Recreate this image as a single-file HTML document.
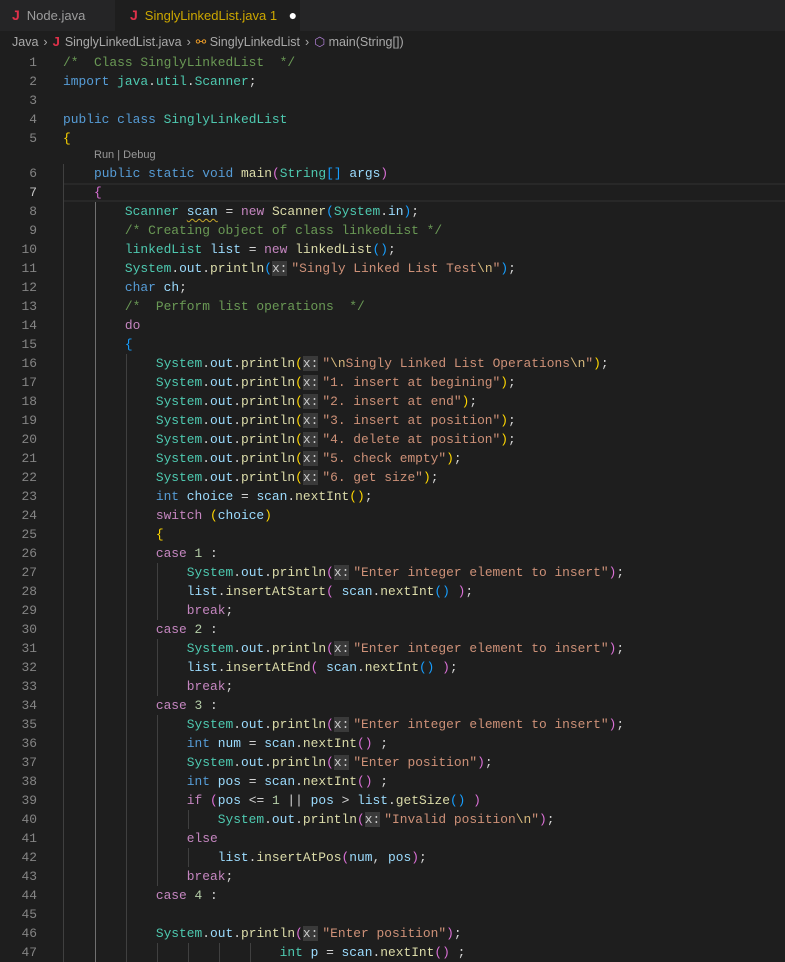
<!DOCTYPE html>
<html><head><meta charset="utf-8"><style>
*{margin:0;padding:0;box-sizing:border-box}
body{width:785px;height:962px;background:#1e1e1e;overflow:hidden;font-family:"Liberation Sans",sans-serif;position:relative}
.tabs{position:absolute;left:0;top:0;width:785px;height:31px;background:#252526}
.tab{position:absolute;top:0;height:31px;font-size:13px;line-height:31px;color:#9d9d9d}
.J{color:#e0314a;font-weight:bold;font-size:14px;margin-right:7px}
.bc{position:absolute;left:12px;top:33px;font-size:12.5px;color:#a9a9a9;line-height:18px;white-space:nowrap}
.bc .sep{color:#a9a9a9;margin:0 5px}
.ed{position:absolute;left:0;top:53px;width:785px}
.ln{position:relative;height:19px;line-height:19px;font-family:"Liberation Mono",monospace;font-size:12.9px;white-space:pre;color:#d4d4d4}
.no{position:absolute;left:0;width:37px;text-align:right;color:#858585}
.cd{position:absolute;left:63px}
.lens{height:16px;line-height:14px;font-size:11px;color:#999;padding-left:94px}
.cur{position:absolute;left:64px;right:0;top:0;height:19px;border-top:2px solid #282828;border-bottom:2px solid #282828}
.g{position:absolute;top:0;height:19px;width:1px;background:#404040}
.ga{background:#707070}
.k{color:#569cd6}.c{color:#c586c0}.t{color:#4ec9b0}.v{color:#9cdcfe}.f{color:#dcdcaa}.s{color:#ce9178}.m{color:#6a9955}.n{color:#b5cea8}.e{color:#d7ba7d}
.b1{color:#ffd700}.b2{color:#da70d6}.b3{color:#179fff}
.h{background:#3a3a3a;color:#cccccc;margin-right:4px}
.sq{text-decoration:underline wavy #c8a82c;text-decoration-thickness:1px;text-underline-offset:3px}
</style></head><body>
<div class="tabs">
 <div class="tab" style="left:0;width:115px;padding-left:12px"><span class="J">J</span>Node.java</div>
 <div class="tab" style="left:115px;width:185px;background:#1e1e1e;padding-left:15px;color:#cca700"><span class="J">J</span>SinglyLinkedList.java 1 <span style="color:#fff;font-size:14px;margin-left:8px">●</span></div>
</div>
<div class="bc">Java<span class="sep">›</span><span class="J" style="font-size:13px;margin-right:5px">J</span>SinglyLinkedList.java<span class="sep">›</span><span style="color:#ee9d28">⚯</span> SinglyLinkedList<span class="sep">›</span><span style="color:#b180d7">⬡</span> main(String[])</div>
<div class="ed">
<div class="ln"><span class="no">1</span><span class="cd"><span class="m">/*  Class SinglyLinkedList  */</span></span></div>
<div class="ln"><span class="no">2</span><span class="cd"><span class="k">import</span> <span class="t">java</span>.<span class="t">util</span>.<span class="t">Scanner</span>;</span></div>
<div class="ln"><span class="no">3</span></div>
<div class="ln"><span class="no">4</span><span class="cd"><span class="k">public</span> <span class="k">class</span> <span class="t">SinglyLinkedList</span></span></div>
<div class="ln"><span class="no">5</span><span class="cd"><span class="b1">{</span></span></div>
<div class="lens">Run | Debug</div>
<div class="ln"><i class="g" style="left:63px"></i><span class="no">6</span><span class="cd">    <span class="k">public</span> <span class="k">static</span> <span class="k">void</span> <span class="f">main</span><span class="b2">(</span><span class="t">String</span><span class="b3">[]</span> <span class="v">args</span><span class="b2">)</span></span></div>
<div class="ln"><div class="cur"></div><i class="g" style="left:63px"></i><span class="no" style="color:#c6c6c6">7</span><span class="cd">    <span class="b2">{</span></span></div>
<div class="ln"><i class="g" style="left:63px"></i><i class="g ga" style="left:95px"></i><span class="no">8</span><span class="cd">        <span class="t">Scanner</span> <span class="v sq">scan</span> = <span class="c">new</span> <span class="f">Scanner</span><span class="b3">(</span><span class="t">System</span>.<span class="v">in</span><span class="b3">)</span>;</span></div>
<div class="ln"><i class="g" style="left:63px"></i><i class="g ga" style="left:95px"></i><span class="no">9</span><span class="cd">        <span class="m">/* Creating object of class linkedList */</span></span></div>
<div class="ln"><i class="g" style="left:63px"></i><i class="g ga" style="left:95px"></i><span class="no">10</span><span class="cd">        <span class="t">linkedList</span> <span class="v">list</span> = <span class="c">new</span> <span class="f">linkedList</span><span class="b3">()</span>;</span></div>
<div class="ln"><i class="g" style="left:63px"></i><i class="g ga" style="left:95px"></i><span class="no">11</span><span class="cd">        <span class="t">System</span>.<span class="v">out</span>.<span class="f">println</span><span class="b3">(</span><span class="h">x:</span><span class="s">"Singly Linked List Test<span class="e">\n</span>"</span><span class="b3">)</span>;</span></div>
<div class="ln"><i class="g" style="left:63px"></i><i class="g ga" style="left:95px"></i><span class="no">12</span><span class="cd">        <span class="k">char</span> <span class="v">ch</span>;</span></div>
<div class="ln"><i class="g" style="left:63px"></i><i class="g ga" style="left:95px"></i><span class="no">13</span><span class="cd">        <span class="m">/*  Perform list operations  */</span></span></div>
<div class="ln"><i class="g" style="left:63px"></i><i class="g ga" style="left:95px"></i><span class="no">14</span><span class="cd">        <span class="c">do</span></span></div>
<div class="ln"><i class="g" style="left:63px"></i><i class="g ga" style="left:95px"></i><span class="no">15</span><span class="cd">        <span class="b3">{</span></span></div>
<div class="ln"><i class="g" style="left:63px"></i><i class="g ga" style="left:95px"></i><i class="g" style="left:126px"></i><span class="no">16</span><span class="cd">            <span class="t">System</span>.<span class="v">out</span>.<span class="f">println</span><span class="b1">(</span><span class="h">x:</span><span class="s">"<span class="e">\n</span>Singly Linked List Operations<span class="e">\n</span>"</span><span class="b1">)</span>;</span></div>
<div class="ln"><i class="g" style="left:63px"></i><i class="g ga" style="left:95px"></i><i class="g" style="left:126px"></i><span class="no">17</span><span class="cd">            <span class="t">System</span>.<span class="v">out</span>.<span class="f">println</span><span class="b1">(</span><span class="h">x:</span><span class="s">"1. insert at begining"</span><span class="b1">)</span>;</span></div>
<div class="ln"><i class="g" style="left:63px"></i><i class="g ga" style="left:95px"></i><i class="g" style="left:126px"></i><span class="no">18</span><span class="cd">            <span class="t">System</span>.<span class="v">out</span>.<span class="f">println</span><span class="b1">(</span><span class="h">x:</span><span class="s">"2. insert at end"</span><span class="b1">)</span>;</span></div>
<div class="ln"><i class="g" style="left:63px"></i><i class="g ga" style="left:95px"></i><i class="g" style="left:126px"></i><span class="no">19</span><span class="cd">            <span class="t">System</span>.<span class="v">out</span>.<span class="f">println</span><span class="b1">(</span><span class="h">x:</span><span class="s">"3. insert at position"</span><span class="b1">)</span>;</span></div>
<div class="ln"><i class="g" style="left:63px"></i><i class="g ga" style="left:95px"></i><i class="g" style="left:126px"></i><span class="no">20</span><span class="cd">            <span class="t">System</span>.<span class="v">out</span>.<span class="f">println</span><span class="b1">(</span><span class="h">x:</span><span class="s">"4. delete at position"</span><span class="b1">)</span>;</span></div>
<div class="ln"><i class="g" style="left:63px"></i><i class="g ga" style="left:95px"></i><i class="g" style="left:126px"></i><span class="no">21</span><span class="cd">            <span class="t">System</span>.<span class="v">out</span>.<span class="f">println</span><span class="b1">(</span><span class="h">x:</span><span class="s">"5. check empty"</span><span class="b1">)</span>;</span></div>
<div class="ln"><i class="g" style="left:63px"></i><i class="g ga" style="left:95px"></i><i class="g" style="left:126px"></i><span class="no">22</span><span class="cd">            <span class="t">System</span>.<span class="v">out</span>.<span class="f">println</span><span class="b1">(</span><span class="h">x:</span><span class="s">"6. get size"</span><span class="b1">)</span>;</span></div>
<div class="ln"><i class="g" style="left:63px"></i><i class="g ga" style="left:95px"></i><i class="g" style="left:126px"></i><span class="no">23</span><span class="cd">            <span class="k">int</span> <span class="v">choice</span> = <span class="v">scan</span>.<span class="f">nextInt</span><span class="b1">()</span>;</span></div>
<div class="ln"><i class="g" style="left:63px"></i><i class="g ga" style="left:95px"></i><i class="g" style="left:126px"></i><span class="no">24</span><span class="cd">            <span class="c">switch</span> <span class="b1">(</span><span class="v">choice</span><span class="b1">)</span></span></div>
<div class="ln"><i class="g" style="left:63px"></i><i class="g ga" style="left:95px"></i><i class="g" style="left:126px"></i><span class="no">25</span><span class="cd">            <span class="b1">{</span></span></div>
<div class="ln"><i class="g" style="left:63px"></i><i class="g ga" style="left:95px"></i><i class="g" style="left:126px"></i><span class="no">26</span><span class="cd">            <span class="c">case</span> <span class="n">1</span> :</span></div>
<div class="ln"><i class="g" style="left:63px"></i><i class="g ga" style="left:95px"></i><i class="g" style="left:126px"></i><i class="g" style="left:157px"></i><span class="no">27</span><span class="cd">                <span class="t">System</span>.<span class="v">out</span>.<span class="f">println</span><span class="b2">(</span><span class="h">x:</span><span class="s">"Enter integer element to insert"</span><span class="b2">)</span>;</span></div>
<div class="ln"><i class="g" style="left:63px"></i><i class="g ga" style="left:95px"></i><i class="g" style="left:126px"></i><i class="g" style="left:157px"></i><span class="no">28</span><span class="cd">                <span class="v">list</span>.<span class="f">insertAtStart</span><span class="b2">(</span> <span class="v">scan</span>.<span class="f">nextInt</span><span class="b3">()</span> <span class="b2">)</span>;</span></div>
<div class="ln"><i class="g" style="left:63px"></i><i class="g ga" style="left:95px"></i><i class="g" style="left:126px"></i><i class="g" style="left:157px"></i><span class="no">29</span><span class="cd">                <span class="c">break</span>;</span></div>
<div class="ln"><i class="g" style="left:63px"></i><i class="g ga" style="left:95px"></i><i class="g" style="left:126px"></i><span class="no">30</span><span class="cd">            <span class="c">case</span> <span class="n">2</span> :</span></div>
<div class="ln"><i class="g" style="left:63px"></i><i class="g ga" style="left:95px"></i><i class="g" style="left:126px"></i><i class="g" style="left:157px"></i><span class="no">31</span><span class="cd">                <span class="t">System</span>.<span class="v">out</span>.<span class="f">println</span><span class="b2">(</span><span class="h">x:</span><span class="s">"Enter integer element to insert"</span><span class="b2">)</span>;</span></div>
<div class="ln"><i class="g" style="left:63px"></i><i class="g ga" style="left:95px"></i><i class="g" style="left:126px"></i><i class="g" style="left:157px"></i><span class="no">32</span><span class="cd">                <span class="v">list</span>.<span class="f">insertAtEnd</span><span class="b2">(</span> <span class="v">scan</span>.<span class="f">nextInt</span><span class="b3">()</span> <span class="b2">)</span>;</span></div>
<div class="ln"><i class="g" style="left:63px"></i><i class="g ga" style="left:95px"></i><i class="g" style="left:126px"></i><i class="g" style="left:157px"></i><span class="no">33</span><span class="cd">                <span class="c">break</span>;</span></div>
<div class="ln"><i class="g" style="left:63px"></i><i class="g ga" style="left:95px"></i><i class="g" style="left:126px"></i><span class="no">34</span><span class="cd">            <span class="c">case</span> <span class="n">3</span> :</span></div>
<div class="ln"><i class="g" style="left:63px"></i><i class="g ga" style="left:95px"></i><i class="g" style="left:126px"></i><i class="g" style="left:157px"></i><span class="no">35</span><span class="cd">                <span class="t">System</span>.<span class="v">out</span>.<span class="f">println</span><span class="b2">(</span><span class="h">x:</span><span class="s">"Enter integer element to insert"</span><span class="b2">)</span>;</span></div>
<div class="ln"><i class="g" style="left:63px"></i><i class="g ga" style="left:95px"></i><i class="g" style="left:126px"></i><i class="g" style="left:157px"></i><span class="no">36</span><span class="cd">                <span class="k">int</span> <span class="v">num</span> = <span class="v">scan</span>.<span class="f">nextInt</span><span class="b2">()</span> ;</span></div>
<div class="ln"><i class="g" style="left:63px"></i><i class="g ga" style="left:95px"></i><i class="g" style="left:126px"></i><i class="g" style="left:157px"></i><span class="no">37</span><span class="cd">                <span class="t">System</span>.<span class="v">out</span>.<span class="f">println</span><span class="b2">(</span><span class="h">x:</span><span class="s">"Enter position"</span><span class="b2">)</span>;</span></div>
<div class="ln"><i class="g" style="left:63px"></i><i class="g ga" style="left:95px"></i><i class="g" style="left:126px"></i><i class="g" style="left:157px"></i><span class="no">38</span><span class="cd">                <span class="k">int</span> <span class="v">pos</span> = <span class="v">scan</span>.<span class="f">nextInt</span><span class="b2">()</span> ;</span></div>
<div class="ln"><i class="g" style="left:63px"></i><i class="g ga" style="left:95px"></i><i class="g" style="left:126px"></i><i class="g" style="left:157px"></i><span class="no">39</span><span class="cd">                <span class="c">if</span> <span class="b2">(</span><span class="v">pos</span> &lt;= <span class="n">1</span> || <span class="v">pos</span> &gt; <span class="v">list</span>.<span class="f">getSize</span><span class="b3">()</span> <span class="b2">)</span></span></div>
<div class="ln"><i class="g" style="left:63px"></i><i class="g ga" style="left:95px"></i><i class="g" style="left:126px"></i><i class="g" style="left:157px"></i><i class="g" style="left:188px"></i><span class="no">40</span><span class="cd">                    <span class="t">System</span>.<span class="v">out</span>.<span class="f">println</span><span class="b2">(</span><span class="h">x:</span><span class="s">"Invalid position<span class="e">\n</span>"</span><span class="b2">)</span>;</span></div>
<div class="ln"><i class="g" style="left:63px"></i><i class="g ga" style="left:95px"></i><i class="g" style="left:126px"></i><i class="g" style="left:157px"></i><span class="no">41</span><span class="cd">                <span class="c">else</span></span></div>
<div class="ln"><i class="g" style="left:63px"></i><i class="g ga" style="left:95px"></i><i class="g" style="left:126px"></i><i class="g" style="left:157px"></i><i class="g" style="left:188px"></i><span class="no">42</span><span class="cd">                    <span class="v">list</span>.<span class="f">insertAtPos</span><span class="b2">(</span><span class="v">num</span>, <span class="v">pos</span><span class="b2">)</span>;</span></div>
<div class="ln"><i class="g" style="left:63px"></i><i class="g ga" style="left:95px"></i><i class="g" style="left:126px"></i><i class="g" style="left:157px"></i><span class="no">43</span><span class="cd">                <span class="c">break</span>;</span></div>
<div class="ln"><i class="g" style="left:63px"></i><i class="g ga" style="left:95px"></i><i class="g" style="left:126px"></i><span class="no">44</span><span class="cd">            <span class="c">case</span> <span class="n">4</span> :</span></div>
<div class="ln"><i class="g" style="left:63px"></i><i class="g ga" style="left:95px"></i><i class="g" style="left:126px"></i><span class="no">45</span></div>
<div class="ln"><i class="g" style="left:63px"></i><i class="g ga" style="left:95px"></i><i class="g" style="left:126px"></i><span class="no">46</span><span class="cd">            <span class="t">System</span>.<span class="v">out</span>.<span class="f">println</span><span class="b2">(</span><span class="h">x:</span><span class="s">"Enter position"</span><span class="b2">)</span>;</span></div>
<div class="ln"><i class="g" style="left:63px"></i><i class="g ga" style="left:95px"></i><i class="g" style="left:126px"></i><i class="g" style="left:157px"></i><i class="g" style="left:188px"></i><i class="g" style="left:219px"></i><i class="g" style="left:250px"></i><span class="no">47</span><span class="cd">                            <span class="t">int</span> <span class="v">p</span> = <span class="v">scan</span>.<span class="f">nextInt</span><span class="b2">()</span> ;</span></div>
</div>
</body></html>
